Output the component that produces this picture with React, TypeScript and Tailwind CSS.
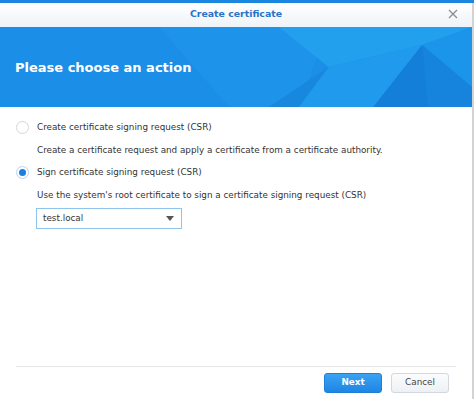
import * as React from "react";

function BannerArt() {
  return (
    <svg className="absolute inset-0 h-full w-full" viewBox="0 0 474 80" preserveAspectRatio="none">
      <rect x="0" y="0" width="474" height="80" fill="#1b8ee7" />
      <polygon points="160,0 330,0 300,80 230,80" fill="#1d93e9" />
      <polygon points="280,0 474,0 424,18 330,40" fill="#22a0ee" />
      <polygon points="424,18 474,0 474,60" fill="#1a95ea" />
      <polygon points="330,40 424,18 375,80 300,80" fill="#1f9aec" />
      <polygon points="424,18 474,60 474,80 375,80" fill="#1683dc" />
      <polygon points="424,18 430,80 375,80" fill="#147fd8" />
      <polygon points="330,40 300,80 270,80" fill="#1788de" />
    </svg>
  );
}

function Radio({ checked }: { checked: boolean }) {
  return (
    <span
      className={`flex h-[13px] w-[13px] shrink-0 items-center justify-center rounded-full border ${
        checked ? "border-[#b9d4ee] bg-white" : "border-[#d6d6d6] bg-white"
      }`}
    >
      {checked && <span className="h-[7px] w-[7px] rounded-full bg-[#1c7fe0]" />}
    </span>
  );
}

export default function App() {
  return (
    <div className="flex h-[399px] w-[474px] flex-col bg-[#d4d4d4] text-[#333] [font-family:'DejaVu_Sans',Verdana,sans-serif]">
      <div className="h-[3px] w-full bg-[#1a86e0]" />
      <div className="flex flex-1">
        <div className="flex w-[472px] flex-col bg-white">
          <div className="relative flex h-[24px] items-center justify-center pb-[1px] bg-gradient-to-b from-white to-[#eef3f8]">
            <span className="text-[9.4px] font-bold text-[#2a73c8]">Create certificate</span>
            <svg className="absolute right-[14px] top-[6px]" width="10" height="10" viewBox="0 0 10 10">
              <path d="M1 1L9 9M9 1L1 9" stroke="#8c8c8c" strokeWidth="1.3" />
            </svg>
          </div>
          <div className="relative h-[80px] overflow-hidden">
            <BannerArt />
            <div className="relative flex h-full items-center pl-[15px] pt-[2px]">
              <h1 className="text-[13px] font-bold text-white">Please choose an action</h1>
            </div>
          </div>

          <div className="flex flex-1 flex-col px-[16px] pt-[14px] text-[8.8px]">
            <label className="flex items-center gap-[8px]">
              <Radio checked={false} />
              <span>Create certificate signing request (CSR)</span>
            </label>
            <p className="mt-[10px] pl-[21px]">Create a certificate request and apply a certificate from a certificate authority.</p>
            <label className="mt-[9px] flex items-center gap-[8px]">
              <Radio checked={true} />
              <span>Sign certificate signing request (CSR)</span>
            </label>
            <p className="mt-[9px] pl-[21px]">Use the system's root certificate to sign a certificate signing request (CSR)</p>
            <div className="ml-[20px] mt-[6px] flex h-[21px] w-[146px] items-center justify-between border border-[#8ec5ee] bg-white pl-[6px] pr-[7px]">
              <span>test.local</span>
              <svg width="8" height="5" viewBox="0 0 8 5">
                <path d="M0 0H8L4 5Z" fill="#555" />
              </svg>
            </div>

            <div className="mt-auto border-t border-[#e6e6e6]" />
            <div className="flex justify-end gap-[9px] pb-[6px] pt-[6px] pr-[7px]">
              <button className="h-[20px] w-[58px] rounded-[3px] border border-[#1f7fd8] bg-gradient-to-b from-[#3aa2f2] to-[#1c86e4] text-[8.8px] font-bold text-white">
                Next
              </button>
              <button className="h-[20px] w-[58px] rounded-[3px] border border-[#d3d8de] bg-gradient-to-b from-[#fbfcfd] to-[#eef1f4] text-[8.8px] text-[#444]">
                Cancel
              </button>
            </div>
          </div>
        </div>
        <div className="flex-1 bg-[#d4d4d4]" />
      </div>
    </div>
  );
}
